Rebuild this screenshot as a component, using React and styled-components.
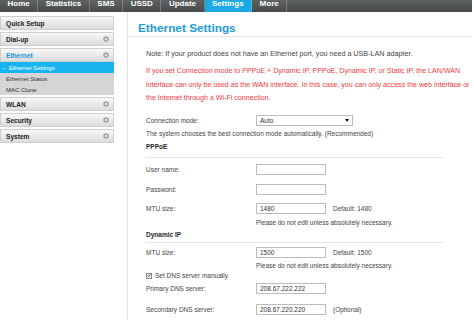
import React from "react";
import styled, { createGlobalStyle } from "styled-components";

const GlobalStyle = createGlobalStyle`
  html, body {
    margin: 0;
    padding: 0;
    background: #fff;
  }
  body {
    font-family: "Liberation Sans", Arial, sans-serif;
    color: #444;
  }
`;

const navItems = ["Home", "Statistics", "SMS", "USSD", "Update", "Settings", "More"];

const menu = [
  { label: "Quick Setup" },
  { label: "Dial-up", icon: true },
  {
    label: "Ethernet",
    icon: true,
    open: true,
    subs: [
      { label: "Ethernet Settings", active: true },
      { label: "Ethernet Status" },
      { label: "MAC Clone" },
    ],
  },
  { label: "WLAN", icon: true },
  { label: "Security", icon: true },
  { label: "System", icon: true },
];

function App() {
  return (
    <>
      <GlobalStyle />
      <TopNav>
        {navItems.map((item) => (
          <NavItem key={item} active={item === "Settings"}>
            {item}
          </NavItem>
        ))}
      </TopNav>
      <Layout>
        <Sidebar>
          {menu.map((m) => (
            <MenuGroup key={m.label}>
              <MenuHeader open={m.open}>
                <span>{m.label}</span>
                {m.icon && <ExpandIcon />}
              </MenuHeader>
              {m.subs &&
                m.subs.map((s) => (
                  <SubItem key={s.label} active={s.active}>
                    {s.active ? "\u2192 " : ""}
                    {s.label}
                  </SubItem>
                ))}
            </MenuGroup>
          ))}
        </Sidebar>
        <Main>
          <Title>Ethernet Settings</Title>
          <Content>
            <Note>
              Note: If your product does not have an Ethernet port, you need a USB-LAN adapter.
            </Note>
            <Warning>
              If you set Connection mode to PPPoE + Dynamic IP, PPPoE, Dynamic IP, or Static IP, the LAN/WAN
              <br />
              interface can only be used as the WAN interface. In this case, you can only access the web interface or
              <br />
              the Internet through a Wi-Fi connection.
            </Warning>

            <FormRow top={8.5}>
              <Label>Connection mode:</Label>
              <SelectBox>
                <span>Auto</span>
                <Caret />
              </SelectBox>
            </FormRow>
            <Text top={0.5}>
              The system chooses the best connection mode automatically. (Recommended)
            </Text>

            <SectionTitle top={1}>PPPoE</SectionTitle>
            <Rule top={4.5} />
            <FormRow top={5}>
              <Label>User name:</Label>
              <Field readOnly value="" />
            </FormRow>
            <FormRow top={8}>
              <Label>Password:</Label>
              <Field readOnly value="" />
            </FormRow>
            <FormRow top={7}>
              <Label>MTU size:</Label>
              <Field readOnly value="1480" />
              <Hint>Default: 1480</Hint>
            </FormRow>
            <Indented top={3} lh={12}>Please do not edit unless absolutely necessary.</Indented>

            <SectionTitle top={0}>Dynamic IP</SectionTitle>
            <Rule top={1} />
            <FormRow top={3.5}>
              <Label>MTU size:</Label>
              <Field readOnly value="1500" />
              <Hint>Default: 1500</Hint>
            </FormRow>
            <Indented top={2} lh={10}>Please do not edit unless absolutely necessary.</Indented>
            <CheckRow>
              <CheckBox>
                <svg width="5" height="5" viewBox="0 0 5 5">
                  <path d="M0.6 2.6 L1.9 3.9 L4.4 0.9" fill="none" stroke="#333" strokeWidth="1" />
                </svg>
              </CheckBox>
              Set DNS server manually
            </CheckRow>
            <FormRow top={1.5}>
              <Label>Primary DNS server:</Label>
              <Field readOnly value="208.67.222.222" />
            </FormRow>
            <FormRow top={9}>
              <Label>Secondary DNS server:</Label>
              <Field readOnly value="208.67.220.220" />
              <Hint>(Optional)</Hint>
            </FormRow>
          </Content>
        </Main>
      </Layout>
    </>
  );
}

function ExpandIcon() {
  return (
    <svg width="6" height="6" viewBox="0 0 6 6">
      <circle cx="3" cy="3" r="2.8" fill="#a3a3a3" />
      <circle cx="3" cy="3" r="1.2" fill="#e4e4e4" />
    </svg>
  );
}

export default App;

const TopNav = styled.div`
  width: 472px;
  height: 12px;
  display: flex;
  background: linear-gradient(#5e6261, #464a49);
  overflow: hidden;
`;

const NavItem = styled.div`
  height: 12px;
  padding: 0 7.5px;
  font-size: 8px;
  line-height: 8px;
  font-weight: bold;
  color: #fff;
  white-space: nowrap;
  border-right: 1px solid rgba(255, 255, 255, 0.22);
  background: ${(p) => (p.active ? "#1ba9e5" : "transparent")};
`;

const Layout = styled.div`
  display: flex;
  align-items: flex-start;
`;

const Sidebar = styled.div`
  width: 114px;
  margin-top: 4px;
  display: flex;
  flex-direction: column;
  gap: 2px;
`;

const MenuGroup = styled.div`
  display: flex;
  flex-direction: column;
`;

const MenuHeader = styled.div`
  height: 14px;
  box-sizing: border-box;
  border: 1px solid #cfcfcf;
  background: linear-gradient(#f8f8f8, #dcdcdc);
  display: flex;
  align-items: center;
  justify-content: space-between;
  padding: 0 4px 0 5px;
  font-size: 6.6px;
  font-weight: bold;
  color: ${(p) => (p.open ? "#2196d6" : "#1b1b1b")};
`;

const SubItem = styled.div`
  height: 11px;
  display: flex;
  align-items: center;
  padding-left: ${(p) => (p.active ? "1px" : "6px")};
  font-size: 6px;
  color: ${(p) => (p.active ? "#fff" : "#333")};
  background: ${(p) => (p.active ? "#17b4ef" : "#d5d5d5")};
`;

const Main = styled.main`
  width: 344px;
  margin-left: 13px;
  min-height: 308px;
  border-left: 1px solid #e4e4e4;
`;

const Title = styled.h1`
  margin: 0;
  padding: 8px 0 0 10px;
  line-height: 16px;
  height: 16px;
  font-size: 11.8px;
  font-weight: bold;
  color: #1e9bd8;
  border-bottom: 1px solid #e2e2e2;
`;

const Content = styled.div`
  padding: 0 29px 0 18px;
`;

const Note = styled.p`
  margin: 10px 0 0;
  font-size: 7.2px;
  line-height: 14px;
  color: #444;
  white-space: nowrap;
`;

const Warning = styled.p`
  margin: 4px 0 0;
  font-size: 7.1px;
  line-height: 13.5px;
  color: #ef3b3f;
  white-space: nowrap;
`;

const FormRow = styled.div`
  display: grid;
  grid-template-columns: 110px auto 1fr;
  align-items: center;
  height: 12px;
  margin-top: ${(p) => p.top}px;
  font-size: 6.5px;
  color: #444;
`;

const Label = styled.span`
  white-space: nowrap;
`;

const Field = styled.input`
  width: 70px;
  height: 11px;
  box-sizing: border-box;
  margin: 0;
  padding: 0 3px;
  border: 1px solid #bcbcbc;
  background: #fff;
  font-family: inherit;
  font-size: 6.5px;
  color: #333;
  outline: none;
`;

const SelectBox = styled.div`
  width: 97px;
  height: 11px;
  box-sizing: border-box;
  border: 1px solid #bcbcbc;
  display: flex;
  align-items: center;
  justify-content: space-between;
  padding: 0 3px;
  font-size: 6.5px;
  color: #333;
`;

const Caret = styled.span`
  width: 0;
  height: 0;
  border-left: 2px solid transparent;
  border-right: 2px solid transparent;
  border-top: 3px solid #111;
`;

const Hint = styled.span`
  margin-left: 7px;
  white-space: nowrap;
`;

const Text = styled.p`
  margin: ${(p) => p.top}px 0 0;
  font-size: 6.5px;
  line-height: 13px;
  color: #444;
  white-space: nowrap;
`;

const SectionTitle = styled.h3`
  margin: ${(p) => p.top}px 0 0;
  font-size: 6.5px;
  line-height: 12px;
  font-weight: bold;
  color: #1f1f1f;
`;

const Rule = styled.div`
  margin-top: ${(p) => p.top}px;
  height: 0;
  border-top: 1px solid #e3e3e3;
`;

const Indented = styled.p`
  margin: ${(p) => p.top}px 0 0 110px;
  font-size: 6.5px;
  line-height: ${(p) => p.lh}px;
  color: #444;
  white-space: nowrap;
`;

const CheckRow = styled.div`
  display: flex;
  align-items: center;
  gap: 3px;
  height: 10px;
  font-size: 6.5px;
  color: #444;
`;

const CheckBox = styled.span`
  width: 6px;
  height: 6px;
  box-sizing: border-box;
  border: 1px solid #8c8c8c;
  background: #eee;
  display: flex;
  align-items: center;
  justify-content: center;
  svg {
    display: block;
  }
`;
